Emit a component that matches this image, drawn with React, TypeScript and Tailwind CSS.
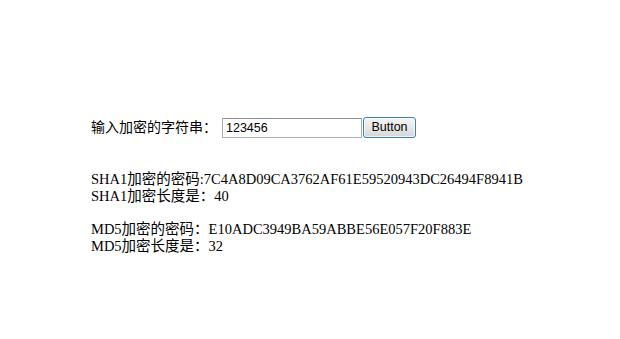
export default function App() {
  return (
    <div className="w-[620px] h-[339px] bg-white text-black pl-[91px] pt-[117px]">
      {/* input row */}
      <div className="flex items-center h-[21px] font-['Liberation_Sans',Arial,'Noto_Sans_CJK_SC',sans-serif]">
        <span className="text-[14px] leading-[21px] whitespace-nowrap">输入加密的字符串：</span>
        <input
          defaultValue="123456"
          className="ml-[5px] w-[140px] h-[20px] border border-[#abadb3] border-t-[#8e9296] bg-white px-[3px] text-[12.5px] text-black outline-none"
        />
        <button className="ml-[1px] w-[53px] h-[21px] rounded-[3px] border border-[#3c7fb1] bg-gradient-to-b from-[#f4f4f4] via-[#e8e8e8] to-[#d6d6d6] text-[12.5px] text-black leading-none shadow-[inset_0_0_0_1px_#ffffffaa]">
          Button
        </button>
      </div>

      {/* results */}
      <div className="mt-[33px] text-[14.5px] leading-[16.7px] whitespace-nowrap font-['Liberation_Serif','Times_New_Roman','Noto_Sans_CJK_SC',serif]">
        <div>SHA1加密的密码:7C4A8D09CA3762AF61E59520943DC26494F8941B</div>
        <div>SHA1加密长度是：40</div>
        <div className="h-[16.7px]" />
        <div>MD5加密的密码：E10ADC3949BA59ABBE56E057F20F883E</div>
        <div>MD5加密长度是：32</div>
      </div>
    </div>
  );
}
